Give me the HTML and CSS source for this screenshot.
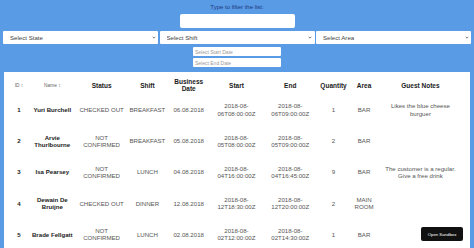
FILE: index.html
```html
<!DOCTYPE html>
<html lang="en">
<head>
  <meta charset="UTF-8"/>
  <meta name="viewport" content="width=device-width, initial-scale=1.0"/>
  <title>Reservations</title>
  <link rel="stylesheet" href="styles.css">
</head>
<body>
  <div class="filters">
    <label class="filter-label" for="search">Type to filter the list:</label>
    <input type="text" id="search" class="search"/>
    <div class="selects">
      <div class="select-wrap">
        <select><option>Select State</option></select>
        <svg class="caret" viewBox="0 0 6 4"><path d="M1 1l2 2 2-2" fill="none" stroke="#444" stroke-width="1.1"/></svg>
      </div>
      <div class="select-wrap">
        <select><option>Select Shift</option></select>
        <svg class="caret" viewBox="0 0 6 4"><path d="M1 1l2 2 2-2" fill="none" stroke="#444" stroke-width="1.1"/></svg>
      </div>
      <div class="select-wrap">
        <select><option>Select Area</option></select>
        <svg class="caret" viewBox="0 0 6 4"><path d="M1 1l2 2 2-2" fill="none" stroke="#444" stroke-width="1.1"/></svg>
      </div>
    </div>
    <input type="text" class="date" placeholder="Select Start Date"/>
    <input type="text" class="date" placeholder="Select End Date"/>
  </div>

  <div class="panel">
    <table>
      <colgroup>
        <col class="c-id"><col class="c-name"><col class="c-status"><col class="c-shift">
        <col class="c-bdate"><col class="c-start"><col class="c-end"><col class="c-qty">
        <col class="c-area"><col class="c-notes">
      </colgroup>
      <thead>
        <tr>
          <th class="sort">ID ↕</th>
          <th class="sort">Name ↕</th>
          <th>Status</th>
          <th>Shift</th>
          <th>Business Date</th>
          <th>Start</th>
          <th>End</th>
          <th>Quantity</th>
          <th>Area</th>
          <th class="notes">Guest Notes</th>
        </tr>
      </thead>
      <tbody id="rows"></tbody>
    </table>
  </div>

  <button class="sandbox">Open Sandbox</button>

  <script>
    const reservations = [
      {id:1, name:'Yuri Burchell', status:'CHECKED OUT', shift:'BREAKFAST', date:'06.08.2018', start:'2018-08-06T08:00:00Z', end:'2018-08-06T09:00:00Z', qty:1, area:'BAR', notes:'Likes the blue cheese burguer'},
      {id:2, name:'Arvie Thurlbourne', status:'NOT CONFIRMED', shift:'BREAKFAST', date:'05.08.2018', start:'2018-08-05T08:00:00Z', end:'2018-08-05T09:00:00Z', qty:2, area:'BAR', notes:''},
      {id:3, name:'Isa Pearsey', status:'NOT CONFIRMED', shift:'LUNCH', date:'04.08.2018', start:'2018-08-04T16:00:00Z', end:'2018-08-04T16:45:00Z', qty:9, area:'BAR', notes:'The customer is a regular. Give a free drink'},
      {id:4, name:'Dewain De Bruijne', status:'CHECKED OUT', shift:'DINNER', date:'12.08.2018', start:'2018-08-12T18:30:00Z', end:'2018-08-12T20:00:00Z', qty:2, area:'MAIN ROOM', notes:''},
      {id:5, name:'Brade Fellgatt', status:'NOT CONFIRMED', shift:'LUNCH', date:'02.08.2018', start:'2018-08-02T12:00:00Z', end:'2018-08-02T14:30:00Z', qty:1, area:'BAR', notes:''}
    ];

    let html = '';
    reservations.forEach(r => {
      html += `
        <tr>
          <td class="id">${r.id}</td>
          <td class="name">${r.name}</td>
          <td>${r.status}</td>
          <td>${r.shift}</td>
          <td>${r.date}</td>
          <td>${r.start}</td>
          <td>${r.end}</td>
          <td>${r.qty}</td>
          <td>${r.area}</td>
          <td class="notes">${r.notes}</td>
        </tr>
      `;
    });
    document.getElementById('rows').innerHTML = html;
  </script>
</body>
</html>
```

FILE: styles.css
```css
* { box-sizing: border-box; }
html, body { margin: 0; padding: 0; }
body {
  background: #5a9be6;
  font-family: 'Liberation Sans', Arial, sans-serif;
  min-height: 100vh;
  overflow: hidden;
}

/* filters */
.filters {
  display: flex; flex-direction: column; align-items: center;
  padding: 3px 3px 0 3px;
}
.filter-label {
  font-size: 6px;
  color: #1d3a7e;
  line-height: 7px;
  margin-top: 1px;
}
.search {
  width: 115px; height: 14px;
  margin-top: 3px;
  border: none; border-radius: 2px;
  background: #fff;
}
.selects {
  width: 100%;
  display: flex; gap: 1.5px;
  margin-top: 3px;
}
.select-wrap {
  flex: 1;
  position: relative;
}
.select-wrap select {
  -webkit-appearance: none; appearance: none;
  width: 100%;
  height: 13px;
  font-family: inherit;
  font-size: 6.1px;
  color: #444;
  border: none; border-radius: 1px;
  background: #fff;
  padding: 0 0 0 7px;
  display: block;
}
.caret {
  position: absolute;
  right: 2.5px; top: 5px;
  width: 4px; height: 3px;
  pointer-events: none;
}
.date {
  width: 88px; height: 9px;
  margin-top: 3px;
  border: none; border-radius: 1px;
  background: #fff;
  font-family: inherit;
  font-size: 5px;
  padding: 0 2px;
}
.date + .date { margin-top: 2px; }
.date::placeholder { color: #999; }

/* table */
.panel {
  margin: 5px 4px 0 4px;
  background: #fff;
  padding: 5px 6px 20px 6.5px;
  min-height: 200px;
}
table {
  border-collapse: collapse;
  table-layout: fixed;
  width: 453px;
  font-size: 6.1px;
  line-height: 7.7px;
  color: #555;
  text-align: center;
}
.c-id { width: 17px; }
.c-name { width: 49.5px; }
.c-status { width: 49px; }
.c-shift { width: 42.5px; }
.c-bdate { width: 40px; }
.c-start { width: 55.5px; }
.c-end { width: 52px; }
.c-qty { width: 34.5px; }
.c-area { width: 26.5px; }
.c-notes { width: 86px; }

th {
  font-size: 6.5px;
  line-height: 7.2px;
  color: #1a1a1a;
  font-weight: bold;
  padding: 1px 1px 2px 1px;
}
th.sort {
  font-size: 4.8px;
  font-weight: normal;
  color: #666;
}
td {
  padding: 8px 1px 7.7px 1px;
}
td.id { color: #1a1a1a; font-weight: bold; }
td.name { color: #1a1a1a; font-weight: bold; }
.notes { padding-left: 4px; padding-right: 4px; }

.sandbox {
  position: fixed;
  left: 421px; top: 227px;
  width: 42px; height: 14px;
  background: #111;
  color: #fff;
  border: none; border-radius: 2px;
  font-family: inherit;
  font-size: 4.3px;
  padding: 0;
}
```
